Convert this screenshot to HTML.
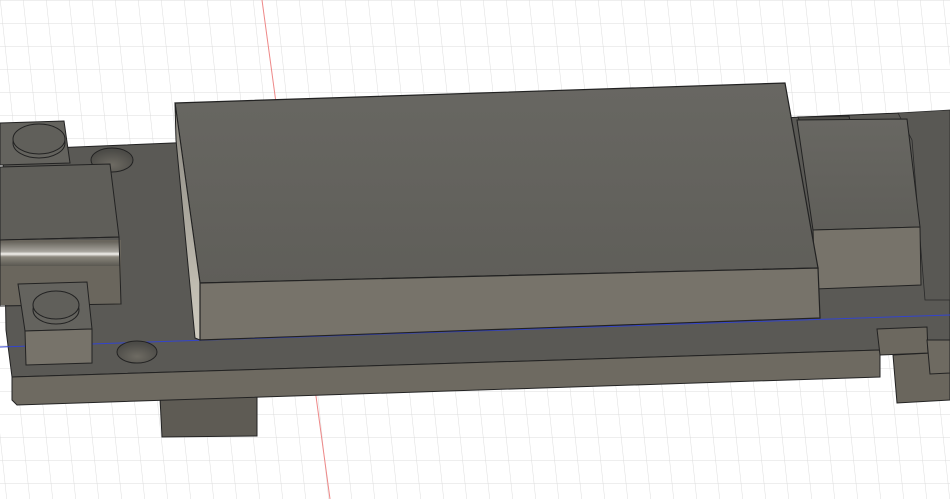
<!DOCTYPE html>
<html><head><style>html,body{margin:0;padding:0;background:#fff;overflow:hidden}</style></head>
<body>
<svg width="950" height="499" viewBox="0 0 950 499" xmlns="http://www.w3.org/2000/svg">
<defs>
<pattern id="g" width="23" height="23" patternUnits="userSpaceOnUse" patternTransform="skewX(6)">
<path d="M0 0H23M0 0V23" stroke="#dcdcdc" stroke-width="1" fill="none"/>
</pattern>
<linearGradient id="cyl" x1="0" y1="0" x2="0" y2="1">
<stop offset="0" stop-color="#6a675f"/><stop offset="0.4" stop-color="#a8a59e"/><stop offset="0.5" stop-color="#f4f2ee"/><stop offset="0.62" stop-color="#8a867c"/><stop offset="1" stop-color="#5a5851"/>
</linearGradient>
<linearGradient id="top" x1="0" y1="0" x2="0" y2="1">
<stop offset="0" stop-color="#686762"/><stop offset="1" stop-color="#5f5e59"/>
</linearGradient>
<linearGradient id="side" x1="0" y1="0" x2="0" y2="1">
<stop offset="0" stop-color="#8a877f"/><stop offset="1" stop-color="#cfcbbf"/>
</linearGradient>
<radialGradient id="hole" cx="0.5" cy="0.7" r="0.6">
<stop offset="0" stop-color="#6e6b63"/><stop offset="1" stop-color="#4c4b47"/>
</radialGradient>
</defs>
<rect width="950" height="499" fill="#fff"/>
<rect width="950" height="499" fill="url(#g)"/>
<line x1="262" y1="0" x2="330" y2="499" stroke="#e88" stroke-width="1"/>
<polygon points="160,398 257,396 257,436 162,437" fill="#5e5b54" stroke="#222" stroke-width="1"/>
<polygon points="893,355 950,352 950,400 897,403" fill="#6a665d" stroke="#222" stroke-width="1"/>
<polygon points="3,150 900,113 950,113 950,343 880,350 12,377 6,330" fill="#5a5955" stroke="#222" stroke-width="1"/>
<polygon points="12,377 880,350 880,377 17,405 12,400" fill="#6e6a61" stroke="#222" stroke-width="1"/>
<polygon points="877,329 927,327 928,353 880,355" fill="#6c685f" stroke="#222" stroke-width="1"/>
<polygon points="927,340 950,340 950,373 930,374" fill="#6e6a61" stroke="#222" stroke-width="1"/>
<line x1="0" y1="347" x2="950" y2="315" stroke="#3344cc" stroke-width="1"/>
<ellipse cx="112" cy="160" rx="21" ry="12" fill="url(#hole)" stroke="#222"/>
<ellipse cx="137" cy="352" rx="20" ry="11" fill="url(#hole)" stroke="#222"/>
<polygon points="898,113 950,110 950,300 925,300 912,140" fill="#595854" stroke="#2a2a2a" stroke-width="0.8"/>
<polygon points="798,117 849,116 850,121 800,122" fill="#4e4d49" stroke="#222"/>
<polygon points="797,120 907,119 920,227 813,230" fill="url(#top)" stroke="#222" stroke-width="1"/>
<polygon points="813,230 920,227 921,285 815,289" fill="#77736a" stroke="#222" stroke-width="1"/>
<polygon points="175,103 785,83 818,268 200,283" fill="url(#top)" stroke="#222" stroke-width="1.2"/>
<polygon points="175,103 200,283 200,340 195,338 176,140" fill="url(#side)" stroke="#222" stroke-width="1"/>
<polygon points="200,283 818,268 820,318 200,340" fill="#77736a" stroke="#222" stroke-width="1.2"/>
<polygon points="0,123 64,121 70,163 0,165" fill="#64635e" stroke="#222"/>
<ellipse cx="39" cy="143" rx="26" ry="15" fill="#64635e" stroke="#222"/>
<ellipse cx="39" cy="139" rx="26" ry="15" fill="#605f5a" stroke="#222"/>
<polygon points="0,167 110,164 119,237 0,240" fill="#5f5e59" stroke="#222" stroke-width="1"/>
<rect x="0" y="240" width="121" height="65" fill="#6a665d"/>
<rect x="0" y="242" width="120" height="24" fill="url(#cyl)"/>
<polygon points="0,240 119,237 121,304 0,306" fill="none" stroke="#222"/>
<polygon points="18,284 87,282 92,329 25,331" fill="#64635e" stroke="#222"/>
<polygon points="25,331 92,329 92,363 26,365" fill="#77736a" stroke="#222"/>
<ellipse cx="56" cy="310" rx="23" ry="14" fill="#64635e" stroke="#222"/>
<ellipse cx="56" cy="305" rx="23" ry="14" fill="#605f5a" stroke="#222"/>
</svg>
</body></html>
